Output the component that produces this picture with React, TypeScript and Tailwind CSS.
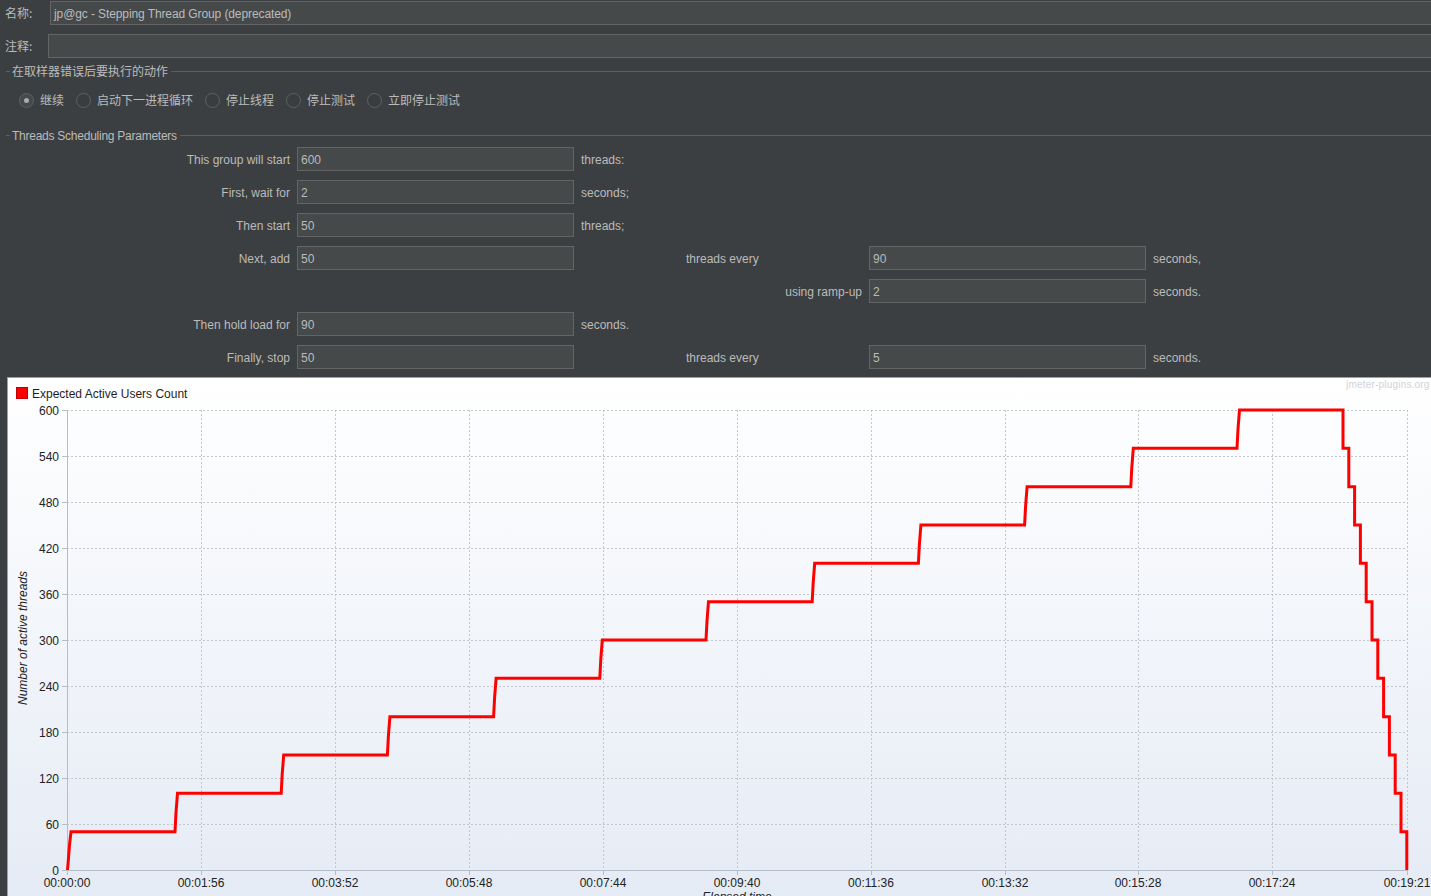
import React from "react";

const Y = (v: number) => 870 - (v * 46) / 60;

function buildPoints(): string {
  const pts: [number, number][] = [
    [67.5, 870],
    [68.5, 858],
    [69.5, 845],
    [71, Y(50)],
  ];
  for (let k = 1; k <= 11; k++) {
    const x = 175 + 106.2 * (k - 1);
    pts.push([x, Y(50 * k)], [x + 1, Y(50 * k + 25)], [x + 2.5, Y(50 * (k + 1))]);
  }
  pts.push([1343, Y(600)]);
  for (let j = 0; j < 12; j++) {
    const x = 1343 + 5.8 * j;
    pts.push([x, Y(600 - 50 * j)], [x, Y(600 - 50 * (j + 1))]);
  }
  return pts.map((p) => `${p[0].toFixed(1)},${p[1].toFixed(1)}`).join(" ");
}

const xTicks = [
  { x: 67, l: "00:00:00" },
  { x: 201, l: "00:01:56" },
  { x: 335, l: "00:03:52" },
  { x: 469, l: "00:05:48" },
  { x: 603, l: "00:07:44" },
  { x: 737, l: "00:09:40" },
  { x: 871, l: "00:11:36" },
  { x: 1005, l: "00:13:32" },
  { x: 1138, l: "00:15:28" },
  { x: 1272, l: "00:17:24" },
  { x: 1407, l: "00:19:21" },
];
const yTicks = [0, 60, 120, 180, 240, 300, 360, 420, 480, 540, 600];

function Radio({ checked, label }: { checked?: boolean; label: string }) {
  return (
    <div className="flex items-center">
      <div
        className={
          "w-[15px] h-[15px] rounded-full border border-[#5f6264] flex items-center justify-center " +
          (checked ? "bg-[#45494b]" : "bg-[#3a3d3f]")
        }
      >
        {checked && <div className="w-[5px] h-[5px] rounded-full bg-[#a9abad]" />}
      </div>
      <span className="ml-[6px]">{label}</span>
    </div>
  );
}

function Field({ value }: { value: string }) {
  return (
    <div className="h-[24px] bg-[#45494a] border border-[#646464] flex items-center pl-[3px] pt-[2px] text-[#bbbbbb]">
      {value}
    </div>
  );
}

function GroupTitle({ title, tight }: { title: string; tight?: boolean }) {
  return (
    <div className="flex items-center pl-[6px] h-[16px]">
      <div className="w-[4px] h-px bg-[#5b5e60]" />
      <span className={"ml-[2px] mr-[3px] " + (tight ? "tracking-[-0.25px] pt-[2px]" : "")}>{title}</span>
      <div className="flex-1 h-px bg-[#5b5e60]" />
    </div>
  );
}

function L({ children, right }: { children?: React.ReactNode; right?: boolean }) {
  return <span className={"pt-[2px] " + (right ? "text-right" : "")}>{children}</span>;
}

export default function App() {
  const pts = buildPoints();
  return (
    <div className="w-[1431px] h-[896px] overflow-hidden bg-[#3c3f41] text-[#bbbbbb] text-[12px] leading-none flex flex-col font-['Liberation_Sans','Noto_Sans_CJK_SC',sans-serif]">
      {/* name */}
      <div className="mt-[1px] flex items-center h-[24px]">
        <span className="w-[50px] pl-[5px] font-['Noto_Sans_CJK_SC',sans-serif]">名称:</span>
        <div className="flex-1 h-[24px] bg-[#45494a] border border-[#646464] border-r-0 flex items-center pl-[3px] pt-[2px] tracking-[-0.1px]">
          jp@gc - Stepping Thread Group (deprecated)
        </div>
      </div>
      {/* comment */}
      <div className="mt-[9px] flex items-center h-[24px]">
        <span className="w-[48px] pl-[5px] font-['Noto_Sans_CJK_SC',sans-serif]">注释:</span>
        <div className="flex-1 h-[24px] bg-[#45494a] border border-[#646464] border-r-0" />
      </div>

      <div className="mt-[5px] font-['Noto_Sans_CJK_SC',sans-serif]">
        <GroupTitle title="在取样器错误后要执行的动作" />
      </div>
      <div className="mt-[11px] h-[20px] pl-[19px] flex items-center gap-[12px] font-['Noto_Sans_CJK_SC',sans-serif]">
        <Radio checked label="继续" />
        <Radio label="启动下一进程循环" />
        <Radio label="停止线程" />
        <Radio label="停止测试" />
        <Radio label="立即停止测试" />
      </div>

      <div className="mt-[17px]">
        <GroupTitle title="Threads Scheduling Parameters" tight />
      </div>

      <div className="mt-[4px] grid grid-cols-[290px_277px_98px_176px_277px_auto] gap-x-[7px] gap-y-[9px] auto-rows-[24px] items-center">
        <L right>This group will start</L>
        <Field value="600" />
        <L>threads:</L>
        <span />
        <span />
        <span />

        <L right>First, wait for</L>
        <Field value="2" />
        <L>seconds;</L>
        <span />
        <span />
        <span />

        <L right>Then start</L>
        <Field value="50" />
        <L>threads;</L>
        <span />
        <span />
        <span />

        <L right>Next, add</L>
        <Field value="50" />
        <span />
        <L>threads every</L>
        <Field value="90" />
        <L>seconds,</L>

        <span />
        <span />
        <span />
        <L right>using ramp-up</L>
        <Field value="2" />
        <L>seconds.</L>

        <L right>Then hold load for</L>
        <Field value="90" />
        <L>seconds.</L>
        <span />
        <span />
        <span />

        <L right>Finally, stop</L>
        <Field value="50" />
        <span />
        <L>threads every</L>
        <Field value="5" />
        <L>seconds.</L>
      </div>

      {/* chart */}
      <div className="mt-[8px] ml-[7px] flex-1 border-l border-t border-[#a0a0a0] overflow-hidden">
        <svg
          width={1423}
          height={518}
          viewBox="8 378 1423 518"
          className="block"
          fontFamily="'Liberation Sans', Arial, sans-serif"
        >
          <defs>
            <linearGradient id="bg" x1="0" y1="0" x2="0" y2="1">
              <stop offset="0" stopColor="#ffffff" />
              <stop offset="1" stopColor="#e5ebf5" />
            </linearGradient>
          </defs>
          <rect x={8} y={378} width={1423} height={518} fill="url(#bg)" />
          <text x={1346} y={388} fontSize={10} fill="#cfd3d9" letterSpacing={0.2}>
            jmeter-plugins.org
          </text>
          <rect x={16.5} y={387.5} width={11} height={11} fill="#ff0000" stroke="#c00000" />
          <text x={32} y={398} fontSize={12} fill="#1e1e1e">
            Expected Active Users Count
          </text>

          {/* grid */}
          <g stroke="#c3c7cd" strokeWidth={1} strokeDasharray="2 2" shapeRendering="crispEdges">
            {yTicks.slice(1).map((v) => (
              <line key={v} x1={67} x2={1407} y1={Math.round(Y(v)) + 0.5} y2={Math.round(Y(v)) + 0.5} />
            ))}
            {xTicks.slice(1).map((t) => (
              <line key={t.x} x1={t.x + 0.5} x2={t.x + 0.5} y1={410} y2={870} />
            ))}
          </g>
          {/* axes */}
          <g stroke="#b5bdc8" strokeWidth={1} shapeRendering="crispEdges">
            <line x1={67.5} x2={67.5} y1={410} y2={870} />
            <line x1={67} x2={1408} y1={870.5} y2={870.5} />
            {yTicks.map((v) => (
              <line key={v} x1={62} x2={67} y1={Math.round(Y(v)) + 0.5} y2={Math.round(Y(v)) + 0.5} />
            ))}
            {xTicks.map((t) => (
              <line key={t.x} x1={t.x + 0.5} x2={t.x + 0.5} y1={870} y2={875} />
            ))}
          </g>
          <g fontSize={12} fill="#222">
            {yTicks.map((v) => (
              <text key={v} x={59} y={Math.round(Y(v)) + 5} textAnchor="end">
                {v}
              </text>
            ))}
            {xTicks.map((t) => (
              <text key={t.x} x={t.x} y={887} textAnchor="middle">
                {t.l}
              </text>
            ))}
            <text x={737} y={901} textAnchor="middle" fontStyle="italic">
              Elapsed time
            </text>
            <text
              x={0}
              y={0}
              textAnchor="middle"
              fontStyle="italic"
              transform="translate(27 638) rotate(-90)"
            >
              Number of active threads
            </text>
          </g>

          <polyline points={pts} fill="none" stroke="#ff0000" strokeWidth={3} strokeLinejoin="miter" />
        </svg>
      </div>
    </div>
  );
}
